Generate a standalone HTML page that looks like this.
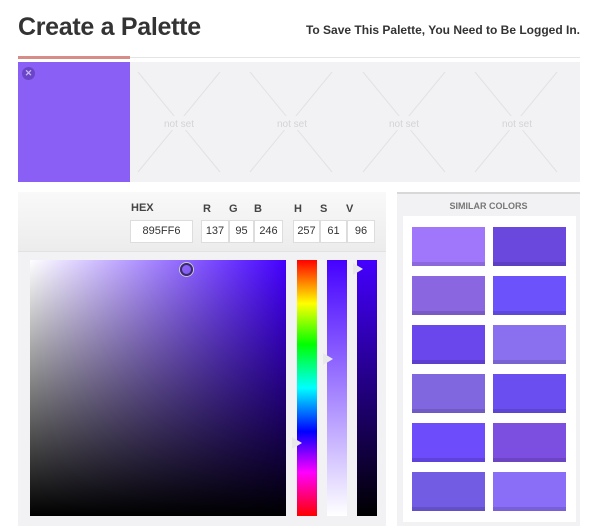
<!DOCTYPE html>
<html><head><style>
*{margin:0;padding:0;box-sizing:border-box}
body{width:600px;height:526px;background:#fff;font-family:"Liberation Sans",sans-serif;position:relative;overflow:hidden}
.a{position:absolute}
h1{position:absolute;left:18px;top:13px;font-size:25px;font-weight:bold;color:#333;letter-spacing:-0.3px}
.login{position:absolute;right:20px;top:23px;font-size:12px;font-weight:bold;color:#333}
.ph{position:absolute;top:62px;height:120px;background:#f2f1f3;overflow:hidden}
.ph span{position:absolute;left:0;right:0;top:56px;text-align:center;font-size:10px;color:#d6d6d8}
.lab{position:absolute;font-size:11px;font-weight:bold;color:#444}
.in{position:absolute;top:220px;height:23px;background:#fff;border:1px solid #ddd;font-size:11px;color:#333;line-height:21px;text-align:center}
.bar{position:absolute;top:260px;width:20px;height:256px}
.knob{position:absolute;width:0;height:0;border-top:6px solid transparent;border-bottom:6px solid transparent;border-left:10px solid #e8e8e8}
.sw{position:absolute;width:73px;height:39px;border-bottom:4px solid rgba(0,0,0,0.12)}
</style></head><body>
<h1>Create a Palette</h1>
<div class="login">To Save This Palette, You Need to Be Logged In.</div>
<div class="a" style="left:18px;top:57px;width:562px;height:1px;background:#e4e4e4"></div>
<div class="a" style="left:18px;top:56px;width:112px;height:3px;background:#d88c86"></div>
<div class="a" style="left:18px;top:62px;width:112px;height:120px;background:#895ff6"></div>
<div class="a" style="left:22px;top:67px;width:13px;height:13px;border-radius:50%;background:#6a45c8;color:#c9b9f2;font-size:9px;font-weight:bold;text-align:center;line-height:13px">✕</div>
<svg class="a" style="left:130px;top:62px" width="450" height="120">
<rect width="450" height="120" fill="#f2f1f3"/>
<g stroke="#e2e1e4" stroke-width="1">
<line x1="8" y1="10" x2="90" y2="110"/><line x1="90" y1="10" x2="8" y2="110"/>
<line x1="120" y1="10" x2="202" y2="110"/><line x1="202" y1="10" x2="120" y2="110"/>
<line x1="233" y1="10" x2="315" y2="110"/><line x1="315" y1="10" x2="233" y2="110"/>
<line x1="345" y1="10" x2="427" y2="110"/><line x1="427" y1="10" x2="345" y2="110"/>
</g>
<g fill="#f2f1f3"><rect x="30" y="54" width="40" height="14"/><rect x="143" y="54" width="40" height="14"/><rect x="255" y="54" width="40" height="14"/><rect x="368" y="54" width="40" height="14"/></g>
<g font-size="10" fill="#d4d3d6" font-family="Liberation Sans" text-anchor="middle"><text x="49" y="65">not set</text><text x="162" y="65">not set</text><text x="274" y="65">not set</text><text x="387" y="65">not set</text></g>
</svg>

<div class="a" style="left:18px;top:192px;width:368px;height:334px;background:#f2f1f3"></div>
<div class="a" style="left:18px;top:192px;width:368px;height:60px;background:linear-gradient(#f9f9f9,#ececec);border-bottom:1px solid #e2e2e2"></div>
<div class="lab" style="left:131px;top:202px">HEX</div>
<div class="lab" style="left:203px;top:203px">R</div>
<div class="lab" style="left:229px;top:203px">G</div>
<div class="lab" style="left:254px;top:203px">B</div>
<div class="lab" style="left:294px;top:203px">H</div>
<div class="lab" style="left:320px;top:203px">S</div>
<div class="lab" style="left:346px;top:203px">V</div>
<div class="in" style="left:130px;width:63px">895FF6</div>
<div class="in" style="left:201px;width:28px">137</div>
<div class="in" style="left:229px;width:25px">95</div>
<div class="in" style="left:254px;width:29px">246</div>
<div class="in" style="left:293px;width:27px">257</div>
<div class="in" style="left:320px;width:27px">61</div>
<div class="in" style="left:347px;width:28px">96</div>

<div class="a" style="left:30px;top:260px;width:256px;height:256px;background:linear-gradient(to bottom,rgba(0,0,0,0),#000),linear-gradient(to right,#fff,#4400ff)"></div>
<div class="a" style="left:180px;top:263px;width:13px;height:13px;border-radius:50%;border:2px solid #3a2a70;box-shadow:0 0 0 1px #ccc"></div>
<div class="bar" style="left:297px;background:linear-gradient(#f00,#ff0 17%,#0f0 33%,#0ff 50%,#00f 67%,#f0f 83%,#f00)"></div>
<div class="bar" style="left:327px;background:linear-gradient(#4400ff,#fff)"></div>
<div class="bar" style="left:357px;background:linear-gradient(#4400ff,#000)"></div>
<div class="knob" style="left:292px;top:437px"></div>
<div class="knob" style="left:323px;top:353px"></div>
<div class="knob" style="left:353px;top:263px"></div>

<div class="a" style="left:397px;top:192px;width:183px;height:334px;background:#f2f1f3;border-top:2px solid #d8d8d8"></div>
<div class="a" style="left:397px;top:201px;width:183px;text-align:center;font-size:9px;font-weight:bold;color:#777">SIMILAR COLORS</div>
<div class="a" style="left:403px;top:216px;width:173px;height:306px;background:#fff"></div>
<div class="sw" style="left:412px;top:227px;background:#a077fb"></div>
<div class="sw" style="left:493px;top:227px;background:#6a48de"></div>
<div class="sw" style="left:412px;top:276px;background:#8a66e0"></div>
<div class="sw" style="left:493px;top:276px;background:#6c52fb"></div>
<div class="sw" style="left:412px;top:325px;background:#6a47ec"></div>
<div class="sw" style="left:493px;top:325px;background:#8a70ee"></div>
<div class="sw" style="left:412px;top:374px;background:#8067e0"></div>
<div class="sw" style="left:493px;top:374px;background:#6b4eef"></div>
<div class="sw" style="left:412px;top:423px;background:#6d4cfb"></div>
<div class="sw" style="left:493px;top:423px;background:#7d4fe0"></div>
<div class="sw" style="left:412px;top:472px;background:#715ce3"></div>
<div class="sw" style="left:493px;top:472px;background:#8a6ef8"></div>
</body></html>
